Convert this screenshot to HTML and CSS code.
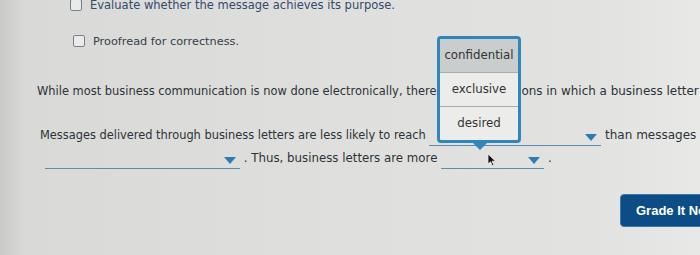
FILE: index.html
```html
<!DOCTYPE html>
<html>
<head>
<meta charset="utf-8">
<link rel="stylesheet" href="styles.css">
</head>
<body>
<div class="page">
  <div class="option opt1"><span class="box"></span><span class="label">Evaluate whether the message achieves its purpose.</span></div>
  <div class="option opt2"><span class="box"></span><span class="label">Proofread for correctness.</span></div>
  <p class="line l1">While most business communication is now done electronically, there<span class="gap"></span><span class="tail">ons in which a business letter</span></p>
  <p class="line l2">Messages delivered through business letters are less likely to reach <span class="select s172"><span class="caret"></span></span> <span class="tail">than messages</span></p>
  <p class="line l3"><span class="select s195"><span class="caret"></span></span> . Thus, business letters are more <span class="select s103"><span class="caret"></span></span> .</p>
  <div class="actions"><button class="grade">Grade It Now!</button></div>
  <div class="popup">
    <div class="item active">confidential</div>
    <div class="item">exclusive</div>
    <div class="item">desired</div>
    <span class="pointer"></span>
  </div>
  <svg class="cursor" width="10" height="14" viewBox="0 0 10 14"><path d="M1 1 L1 11 L3.5 8.8 L5.5 13 L7 12.3 L5 8.2 L8.5 8.2 Z" fill="#111" stroke="#eee" stroke-width="0.8"/></svg>
</div>
</body>
</html>
```

FILE: styles.css
```css
html, body {
  margin: 0;
  padding: 0;
}
body {
  width: 700px;
  height: 255px;
  overflow: hidden;
  background: linear-gradient(90deg, #c9cac8 0px, #d9dad7 25px, #dfe0dd 50%, #e2e3e0 85%, #e8e9e6 100%);
  font-family: "DejaVu Sans", Verdana, sans-serif;
  font-size: 11.4px;
  color: #2d3238;
}
.page {
  position: relative;
  display: flow-root;
  height: 255px;
}
.option {
  display: flex;
  align-items: center;
  gap: 8px;
  height: 20px;
}
.opt1 {
  margin-top: -5px;
  padding-left: 70px;
}
.opt2 {
  margin-top: 16px;
  padding-left: 73px;
}
.box {
  width: 10px;
  height: 10px;
  border: 1.5px solid #7b8088;
  border-radius: 2px;
  background: #e9eaea;
}
.opt1 .label {
  color: #34496a;
  font-size: 11.5px;
}
.opt2 .label {
  color: #353c48;
  font-size: 11.3px;
}
.line {
  margin: 0;
  height: 20px;
  line-height: 20px;
  white-space: nowrap;
}
.l1 {
  margin-top: 30px;
  padding-left: 37px;
  font-size: 11.45px;
}
.l1 .tail {
  font-size: 11.95px;
}
.l2 {
  margin-top: 24px;
  padding-left: 40px;
}
.l2 .tail {
  font-size: 12px;
}
.l3 {
  margin-top: 3px;
  padding-left: 45px;
  font-size: 11.8px;
}
.gap {
  display: inline-block;
  width: 85px;
}
.select {
  display: inline-flex;
  justify-content: flex-end;
  align-items: center;
  height: 14px;
  border-bottom: 1.5px solid #5a8db0;
  vertical-align: -2px;
}
.s172 { width: 172px; }
.s195 { width: 195px; }
.s103 { width: 103px; }
.caret {
  width: 0;
  height: 0;
  border-left: 6px solid transparent;
  border-right: 6px solid transparent;
  border-top: 7px solid #2b7db3;
  margin-right: 4px;
}
.actions {
  margin-top: 26px;
  padding-left: 620px;
}
.grade {
  display: block;
  width: 110px;
  height: 33px;
  border: 1px solid #3c77a8;
  border-radius: 4px;
  background: #0d4d85;
  color: #ffffff;
  font-family: "Liberation Sans", Arial, sans-serif;
  font-weight: bold;
  font-size: 13px;
  text-align: left;
  padding: 0 0 0 15px;
}
.popup {
  position: absolute;
  left: 437px;
  top: 36px;
  width: 78px;
  border: 3px solid #2f86b8;
  border-radius: 4px;
  background: #ececea;
}
.item {
  height: 33px;
  line-height: 33px;
  text-align: center;
  color: #333;
  font-size: 11.8px;
  border-top: 1px solid #a9acad;
}
.item:first-child {
  border-top: none;
}
.item.active {
  background: #c9cdcd;
}
.pointer {
  position: absolute;
  left: 33px;
  bottom: -10px;
  width: 0;
  height: 0;
  border-left: 7px solid transparent;
  border-right: 7px solid transparent;
  border-top: 7px solid #2f86b8;
}
.cursor {
  position: absolute;
  left: 487px;
  top: 153px;
}
```
